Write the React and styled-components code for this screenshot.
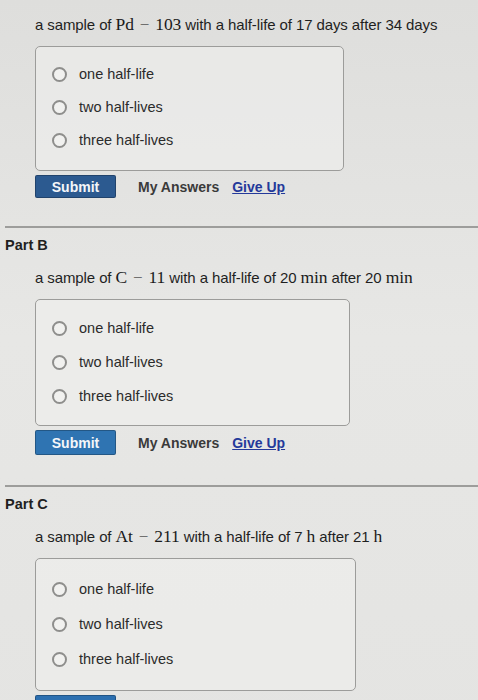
import React from 'react';
import styled, { createGlobalStyle } from 'styled-components';

const GlobalStyle = createGlobalStyle`
    html, body {
        margin: 0;
        padding: 0;
    }

    body {
        background: linear-gradient(180deg, #dededc 0%, #e7e7e5 45%, #e4e4e2 100%);
        font-family: "Liberation Sans", Arial, sans-serif;
        color: #262626;
        min-height: 700px;
        overflow: hidden;
    }
`

const parts = [
    {
        title: null,
        element: 'Pd',
        mass: '103',
        half: ['17', ' days'],
        after: ['34', ' days'],
        mathUnits: false,
        boxWidth: 309,
        boxHeight: 125,
        padTop: 17,
        rowGap: 13,
        button: '#2c5a90',
        buttonHeight: 23,
        tail: 28
    },
    {
        title: 'Part B',
        element: 'C',
        mass: '11',
        half: ['20', 'min'],
        after: ['20', 'min'],
        mathUnits: true,
        boxWidth: 315,
        boxHeight: 127,
        padTop: 18,
        rowGap: 14,
        button: '#2f74b2',
        buttonHeight: 25,
        tail: 30
    },
    {
        title: 'Part C',
        element: 'At',
        mass: '211',
        half: ['7', 'h'],
        after: ['21', 'h'],
        mathUnits: true,
        boxWidth: 321,
        boxHeight: 133,
        padTop: 20,
        rowGap: 15,
        button: '#2b6fb0',
        buttonHeight: 25,
        tail: 30
    }
];

const choices = ['one half-life', 'two half-lives', 'three half-lives'];

const Unit = ({ value, unit, math }) => {
    if (!math) {
        return <>{ value }{ unit }</>;
    }
    return <>{ value } <Math>{ unit }</Math></>;
}

class App extends React.Component {
    render() {
        return (
            <Page>
                <GlobalStyle />

                { parts.map((part, i) => (
                    <React.Fragment key={ part.element }>
                        { i > 0 && <Divider /> }

                        <Part>
                            { part.title && (
                                <PartTitle>
                                    { part.title }
                                </PartTitle>
                            ) }

                            <Question>
                                a sample of <Math>{ part.element }</Math>
                                <Minus>−</Minus>
                                <Math>{ part.mass }</Math> with a half-life of{' '}
                                <Unit value={ part.half[0] } unit={ part.half[1] } math={ part.mathUnits } /> after{' '}
                                <Unit value={ part.after[0] } unit={ part.after[1] } math={ part.mathUnits } />
                            </Question>

                            <Choices
                                width={ part.boxWidth }
                                height={ part.boxHeight }
                                padTop={ part.padTop }
                                gap={ part.rowGap }
                            >
                                { choices.map((label) => (
                                    <Choice key={ label }>
                                        <Radio />
                                        { label }
                                    </Choice>
                                )) }
                            </Choices>

                            <Actions tail={ part.tail }>
                                <Submit color={ part.button } height={ part.buttonHeight }>
                                    Submit
                                </Submit>

                                <MyAnswers>
                                    My Answers
                                </MyAnswers>

                                <GiveUp href="#">
                                    Give Up
                                </GiveUp>
                            </Actions>
                        </Part>
                    </React.Fragment>
                )) }
            </Page>
        );
    }
}

export default App;

const Page = styled.div`
    display: flex;
    flex-direction: column;
    padding-top: 15px;
`

const Part = styled.section`
    display: flex;
    flex-direction: column;
`

const PartTitle = styled.div`
    font-size: 14.5px;
    font-weight: 700;
    line-height: 16px;
    color: #1f1f1f;
    margin: 9px 0 15px 5px;
`

const Question = styled.div`
    font-size: 15px;
    line-height: 19px;
    color: #1f1f1f;
    letter-spacing: -0.1px;
    margin-left: 35px;
    white-space: nowrap;
`

const Math = styled.span`
    font-family: "Liberation Serif", "Times New Roman", serif;
    font-size: 17.5px;
    color: #1a1a1a;
`

const Minus = styled.span`
    font-family: "Liberation Serif", "Times New Roman", serif;
    font-size: 17px;
    color: #555;
    margin: 0 6px;
`

const Choices = styled.div`
    box-sizing: border-box;
    display: flex;
    flex-direction: column;
    gap: ${ (p) => p.gap }px;
    width: ${ (p) => p.width }px;
    height: ${ (p) => p.height }px;
    margin: 12px 0 0 35px;
    padding: ${ (p) => p.padTop }px 16px 0;
    border: 1px solid #9c9c9a;
    border-radius: 5px;
    background: rgba(240, 240, 238, 0.55);
`

const Choice = styled.label`
    display: flex;
    align-items: center;
    gap: 12px;
    height: 20px;
    font-size: 14.5px;
    color: #2b2b2b;
`

const Radio = styled.span`
    box-sizing: border-box;
    width: 15px;
    height: 15px;
    border-radius: 50%;
    border: 2px solid #8e8e8c;
    background: #f1f1ef;
`

const Actions = styled.div`
    display: flex;
    align-items: center;
    margin: 4px 0 ${ (p) => p.tail }px 35px;
`

const Submit = styled.button`
    width: 81px;
    height: ${ (p) => p.height }px;
    border: 1px solid rgba(0, 0, 0, 0.25);
    border-radius: 2px;
    background: ${ (p) => p.color };
    color: #f4f6f9;
    font-family: "Liberation Sans", Arial, sans-serif;
    font-size: 14px;
    font-weight: 700;
    margin-right: 22px;
    padding: 0;
`

const MyAnswers = styled.span`
    font-size: 14px;
    font-weight: 700;
    color: #3a3a3a;
    margin-right: 13px;
`

const GiveUp = styled.a`
    font-size: 14px;
    font-weight: 700;
    color: #24399a;
    text-decoration: underline;
`

const Divider = styled.hr`
    width: calc(100% - 5px);
    margin: 0 0 0 5px;
    border: 0;
    height: 2px;
    background: #9d9d9b;
`
